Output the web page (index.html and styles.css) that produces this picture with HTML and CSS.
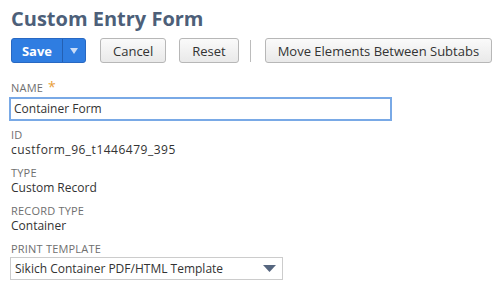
FILE: index.html
```html
<!DOCTYPE html>
<html>
<head>
<meta charset="utf-8">
<link rel="stylesheet" href="styles.css">
</head>
<body>
<div class="page">
  <h1 class="title">Custom Entry Form</h1>
  <div class="toolbar">
    <div class="btn-split">
      <span class="btn-save">Save</span>
      <span class="btn-caret"><svg width="8" height="6" viewBox="0 0 8 6"><path d="M0 0H8L4 6Z" fill="#c9dcf7"/></svg></span>
    </div>
    <span class="btn">Cancel</span>
    <span class="btn">Reset</span>
    <span class="sep"></span>
    <span class="btn last">Move Elements Between Subtabs</span>
  </div>
  <div class="field first">
    <div class="label">NAME <span class="req">*</span></div>
    <div class="input">Container Form</div>
  </div>
  <div class="field">
    <div class="label">ID</div>
    <div class="value mono-ish">custform_96_t1446479_395</div>
  </div>
  <div class="field">
    <div class="label">TYPE</div>
    <div class="value">Custom Record</div>
  </div>
  <div class="field">
    <div class="label">RECORD TYPE</div>
    <div class="value">Container</div>
  </div>
  <div class="field">
    <div class="label">PRINT TEMPLATE</div>
    <div class="select">
      <span>Sikich Container PDF/HTML Template</span>
      <svg width="13" height="7" viewBox="0 0 13 7"><path d="M0 0H13L6.5 7Z" fill="#56667f"/></svg>
    </div>
  </div>
</div>
</body>
</html>
```
FILE: styles.css
```css
html, body {
  margin: 0;
  padding: 0;
  background: #ffffff;
}
body {
  font-family: "Open Sans", "Liberation Sans", sans-serif;
  color: #333333;
}
.page {
  padding: 6px 0 0 11px;
}
.title {
  margin: 0;
  font-size: 20px;
  line-height: 26px;
  font-weight: 700;
  color: #4d5f79;
}
.toolbar {
  display: flex;
  align-items: center;
  margin-top: 6px;
  height: 25px;
}
.toolbar > * {
  flex-shrink: 0;
}
.btn-split {
  display: flex;
  height: 25px;
  width: 75px;
  box-sizing: border-box;
  background: #2f7de1;
  border: 1px solid #2868c2;
  border-radius: 3px;
  margin-right: 14px;
}
.btn-save {
  width: 50px;
  display: flex;
  align-items: center;
  justify-content: center;
  color: #ffffff;
  font-weight: 700;
  font-size: 13px;
  border-right: 1px solid #2460b3;
}
.btn-caret {
  flex: 1;
  display: flex;
  align-items: center;
  justify-content: center;
}
.btn {
  height: 25px;
  box-sizing: border-box;
  display: flex;
  align-items: center;
  white-space: nowrap;
  padding: 0 12px;
  font-size: 13px;
  font-weight: 400;
  color: #333333;
  background: linear-gradient(#fafafa, #e9e9e9);
  border: 1px solid #b7b7b7;
  border-radius: 3px;
  margin-right: 13px;
}
.btn.last {
  margin-right: 0;
}
.sep {
  width: 1px;
  height: 22px;
  background: #bcbcbc;
  margin: 0 14px 0 -2px;
}
.field {
  margin-top: 7px;
}
.field.first {
  margin-top: 17px;
}
.label {
  font-size: 11px;
  line-height: 13px;
  color: #6f6f6f;
  letter-spacing: 0.2px;
}
.req {
  color: #e8a03a;
  font-size: 14px;
  margin-left: 2px;
}
.value {
  font-size: 12px;
  line-height: 18px;
  color: #333333;
}
.mono-ish {
  letter-spacing: 0.5px;
}
.input {
  margin-top: 3px;
  margin-left: -2px;
  width: 383px;
  height: 24px;
  box-sizing: border-box;
  border: 2px solid #79a9e6;
  padding: 1px 3px;
  font-size: 12px;
  line-height: 18px;
  color: #333333;
}
.select {
  margin-top: 2px;
  margin-left: -1px;
  width: 273px;
  height: 23px;
  box-sizing: border-box;
  border: 1px solid #cccccc;
  display: flex;
  align-items: center;
  justify-content: space-between;
  padding: 0 6px 0 4px;
  font-size: 12px;
  color: #333333;
}
```
